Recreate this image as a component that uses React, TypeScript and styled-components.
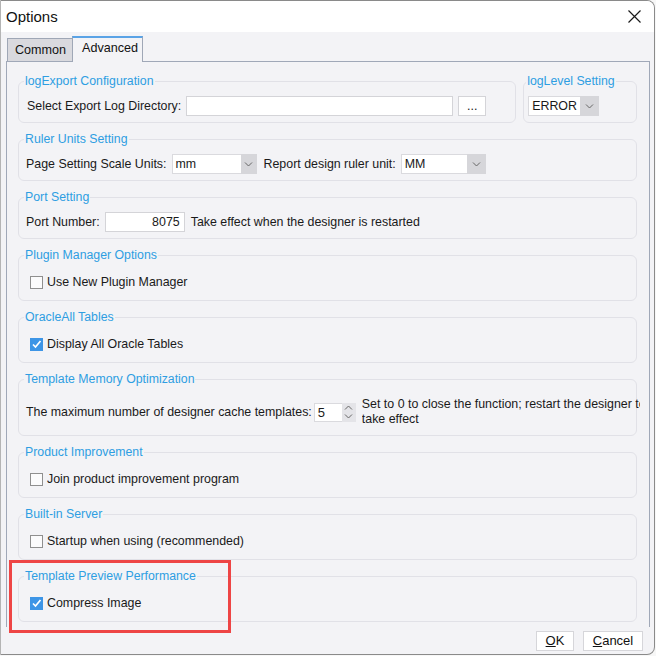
import React from "react";
import styled, { createGlobalStyle } from "styled-components";

const GlobalStyle = createGlobalStyle`
  html, body { margin: 0; padding: 0; background: #f7f7f7; }
  body {
    font-family: "Liberation Sans", Arial, sans-serif;
    font-size: 12.4px;
    color: #1a1a1a;
  }
`;

const Window = styled.div`
  position: relative;
  width: 655px;
  height: 655px;
  box-sizing: border-box;
  border: 1px solid #8a8a8a;
  border-left-color: #b4b4b4;
  border-radius: 0 8px 8px 0;
  background: #f3f3f6;
  overflow: hidden;
  display: flex;
  flex-direction: column;
`;

const TitleBar = styled.div`
  height: 31px;
  flex: none;
  background: #fff;
  display: flex;
  align-items: center;
  padding-left: 5px;
`;

const Title = styled.span`
  font-size: 15px;
  color: #111;
`;

const CloseButton = styled.div`
  margin-left: auto;
  width: 40px;
  height: 31px;
  display: flex;
  align-items: center;
  justify-content: center;
`;

const Body = styled.div`
  flex: 1;
  display: flex;
  flex-direction: column;
  padding: 4px 4px 3px 5px;
`;

const TabBar = styled.div`
  display: flex;
  align-items: flex-end;
  height: 25px;
  padding-left: 1px;
`;

const Tab = styled.div<{ $active?: boolean; $w: number }>`
  box-sizing: border-box;
  width: ${(p) => p.$w}px;
  height: ${(p) => (p.$active ? 26 : 23)}px;
  margin-bottom: ${(p) => (p.$active ? -1 : 0)}px;
  position: relative;
  z-index: ${(p) => (p.$active ? 1 : 0)};
  background: ${(p) => (p.$active ? "#f3f3f6" : "#d9d9de")};
  border: 1px solid #9fa7b6;
  border-bottom: none;
  border-right: ${(p) => (p.$active ? "1px solid #9fa7b6" : "none")};
  border-top: ${(p) => (p.$active ? "2px solid #5aa3e6" : "1px solid #9fa7b6")};
  padding-left: ${(p) => (p.$active ? 9 : 7)}px;
  line-height: ${(p) => (p.$active ? 21 : 22)}px;
  font-size: 12.6px;
  color: #111;
`;

const Panel = styled.div`
  box-sizing: border-box;
  width: 644px;
  height: 566px;
  border: 1px solid #a0a8b8;
  border-bottom: none;
  padding: 12px 12px 0 11px;
  display: flex;
  flex-direction: column;
  gap: 9px;
`;

const TopRow = styled.div`
  display: flex;
  gap: 7px;
`;

const Group = styled.fieldset<{ $pt: number; $pb: number; $pl?: number; $w?: number }>`
  margin: 0;
  min-width: 0;
  box-sizing: border-box;
  ${(p) => (p.$w ? `width: ${p.$w}px;` : "")}
  border: 1px solid #e1e1e7;
  border-radius: 6px;
  padding: ${(p) => p.$pt}px 8px ${(p) => p.$pb}px ${(p) => p.$pl ?? 7}px;
`;

const Legend = styled.legend`
  font-size: 12.3px;
  line-height: 14px;
  color: #2e9ee2;
  padding: 0 1px;
  margin-left: -2px;
`;

const Row = styled.div<{ $h?: number }>`
  display: flex;
  align-items: center;
  height: ${(p) => p.$h ?? 20}px;
  gap: 5px;
  white-space: nowrap;
`;

const Label = styled.span<{ $ml?: number }>`
  margin-left: ${(p) => p.$ml ?? 0}px;
`;

const TextField = styled.div<{ $w: number; $right?: boolean }>`
  box-sizing: border-box;
  width: ${(p) => p.$w}px;
  height: 20px;
  background: #fff;
  border: 1px solid #d4d4d8;
  line-height: 18px;
  padding: 0 4px;
  text-align: ${(p) => (p.$right ? "right" : "left")};
`;

const SmallButton = styled.div`
  box-sizing: border-box;
  width: 28px;
  height: 20px;
  background: #fff;
  border: 1px solid #d4d4d8;
  text-align: center;
  line-height: 18px;
`;

const SelectBox = styled.div<{ $w: number }>`
  display: flex;
  width: ${(p) => p.$w}px;
  height: 20px;
`;

const SelectValue = styled.div`
  flex: 1;
  box-sizing: border-box;
  background: #fff;
  border: 1px solid #dadade;
  border-right: none;
  padding-left: 3px;
  line-height: 18px;
`;

const SelectArrow = styled.div<{ $w: number }>`
  width: ${(p) => p.$w}px;
  background: #d6d6da;
  display: flex;
  align-items: center;
  justify-content: center;
`;

const Spinner = styled.div`
  display: flex;
  flex: none;
  width: 42px;
  height: 19px;
  margin-left: -3px;
`;

const SpinValue = styled.div`
  flex: 1;
  box-sizing: border-box;
  background: #fff;
  border: 1px solid #dadade;
  border-right: none;
  padding-left: 3px;
  line-height: 17px;
  font-size: 13px;
`;

const SpinArrows = styled.div`
  width: 14px;
  background: #e4e4e8;
  display: flex;
  flex-direction: column;
  align-items: center;
  justify-content: space-around;
`;

const Note = styled.div`
  flex: none;
  width: 278px;
  overflow: hidden;
  white-space: nowrap;
  line-height: 15px;
  margin-left: 1px;
`;

const CheckRow = styled.label`
  display: flex;
  align-items: center;
  height: 20px;
  gap: 4px;
  padding-left: 4px;
`;

const Box = styled.span<{ $checked?: boolean }>`
  box-sizing: border-box;
  width: 13px;
  height: 13px;
  display: flex;
  align-items: center;
  justify-content: center;
  background: ${(p) => (p.$checked ? "#3d95e6" : "#fbfbfc")};
  border: 1px solid ${(p) => (p.$checked ? "#3d95e6" : "#8f8f8f")};
`;

const Footer = styled.div`
  display: flex;
  justify-content: flex-end;
  gap: 9px;
  margin-top: 4px;
  padding-right: 7px;
`;

const DialogButton = styled.div<{ $w: number }>`
  box-sizing: border-box;
  width: ${(p) => p.$w}px;
  height: 20px;
  background: #fff;
  border: 1px solid #d6d6da;
  text-align: center;
  line-height: 18px;
  font-size: 13px;
  color: #111;
`;

const Highlight = styled.div`
  position: absolute;
  left: 8px;
  top: 559px;
  width: 222px;
  height: 73px;
  box-sizing: border-box;
  border: 3px solid #ee4545;
  pointer-events: none;
`;

const Chevron = ({ up }: { up?: boolean }) => (
  <svg width="9" height="5" viewBox="0 0 9 5">
    <polyline
      points={up ? "1,4.5 4.5,1 8,4.5" : "1,0.5 4.5,4 8,0.5"}
      fill="none"
      stroke="#666"
      strokeWidth="1"
    />
  </svg>
);

const Select = ({ value, w, arrow }: { value: string; w: number; arrow: number }) => (
  <SelectBox $w={w}>
    <SelectValue>{value}</SelectValue>
    <SelectArrow $w={arrow}>
      <Chevron />
    </SelectArrow>
  </SelectBox>
);

const Check = ({ checked, children }: { checked?: boolean; children: React.ReactNode }) => (
  <CheckRow>
    <Box $checked={checked}>
      {checked && (
        <svg width="11" height="11" viewBox="0 0 11 11">
          <polyline points="2,5.5 4.5,8 9.5,2" fill="none" stroke="#fff" strokeWidth="1.7" />
        </svg>
      )}
    </Box>
    <span>{children}</span>
  </CheckRow>
);

export default function App() {
  return (
    <>
      <GlobalStyle />
      <Window>
        <TitleBar>
          <Title>Options</Title>
          <CloseButton>
            <svg width="13" height="13" viewBox="0 0 13 13">
              <path d="M0.5 0.5 L12.5 12.5 M12.5 0.5 L0.5 12.5" stroke="#1a1a1a" strokeWidth="1.2" />
            </svg>
          </CloseButton>
        </TitleBar>
        <Body>
          <TabBar>
            <Tab $w={65}>Common</Tab>
            <Tab $w={71} $active>
              Advanced
            </Tab>
          </TabBar>
          <Panel>
            <TopRow>
              <Group $pt={8} $pb={6} $w={499}>
                <Legend>logExport Configuration</Legend>
                <Row>
                  <Label $ml={1}>Select Export Log Directory:</Label>
                  <TextField $w={267} />
                  <SmallButton>...</SmallButton>
                </Row>
              </Group>
              <Group $pt={8} $pb={6} $pl={4} $w={114}>
                <Legend>logLevel Setting</Legend>
                <Row>
                  <Select value="ERROR" w={71} arrow={19} />
                </Row>
              </Group>
            </TopRow>

            <Group $pt={8} $pb={6}>
              <Legend>Ruler Units Setting</Legend>
              <Row>
                <Label>Page Setting Scale Units:</Label>
                <Select value="mm" w={85} arrow={16} />
                <Label $ml={2}>Report design ruler unit:</Label>
                <Select value="MM" w={85} arrow={19} />
              </Row>
            </Group>

            <Group $pt={8} $pb={6}>
              <Legend>Port Setting</Legend>
              <Row>
                <Label>Port Number:</Label>
                <TextField $w={80} $right>
                  8075
                </TextField>
                <Label $ml={1}>Take effect when the designer is restarted</Label>
              </Row>
            </Group>

            <Group $pt={10} $pb={8}>
              <Legend>Plugin Manager Options</Legend>
              <Check>Use New Plugin Manager</Check>
            </Group>

            <Group $pt={10} $pb={8}>
              <Legend>OracleAll Tables</Legend>
              <Check checked>Display All Oracle Tables</Check>
            </Group>

            <Group $pt={11} $pb={8}>
              <Legend>Template Memory Optimization</Legend>
              <Row $h={30}>
                <Label>The maximum number of designer cache templates:</Label>
                <Spinner>
                  <SpinValue>5</SpinValue>
                  <SpinArrows>
                    <Chevron up />
                    <Chevron />
                  </SpinArrows>
                </Spinner>
                <Note>
                  Set to 0 to close the function; restart the designer to
                  <br />
                  take effect
                </Note>
              </Row>
            </Group>

            <Group $pt={10} $pb={8}>
              <Legend>Product Improvement</Legend>
              <Check>Join product improvement program</Check>
            </Group>

            <Group $pt={10} $pb={8}>
              <Legend>Built-in Server</Legend>
              <Check>Startup when using (recommended)</Check>
            </Group>

            <Group $pt={10} $pb={8}>
              <Legend>Template Preview Performance</Legend>
              <Check checked>Compress Image</Check>
            </Group>
          </Panel>
          <Footer>
            <DialogButton $w={38}>
              <u>O</u>K
            </DialogButton>
            <DialogButton $w={60}>
              <u>C</u>ancel
            </DialogButton>
          </Footer>
        </Body>
        <Highlight />
      </Window>
    </>
  );
}
